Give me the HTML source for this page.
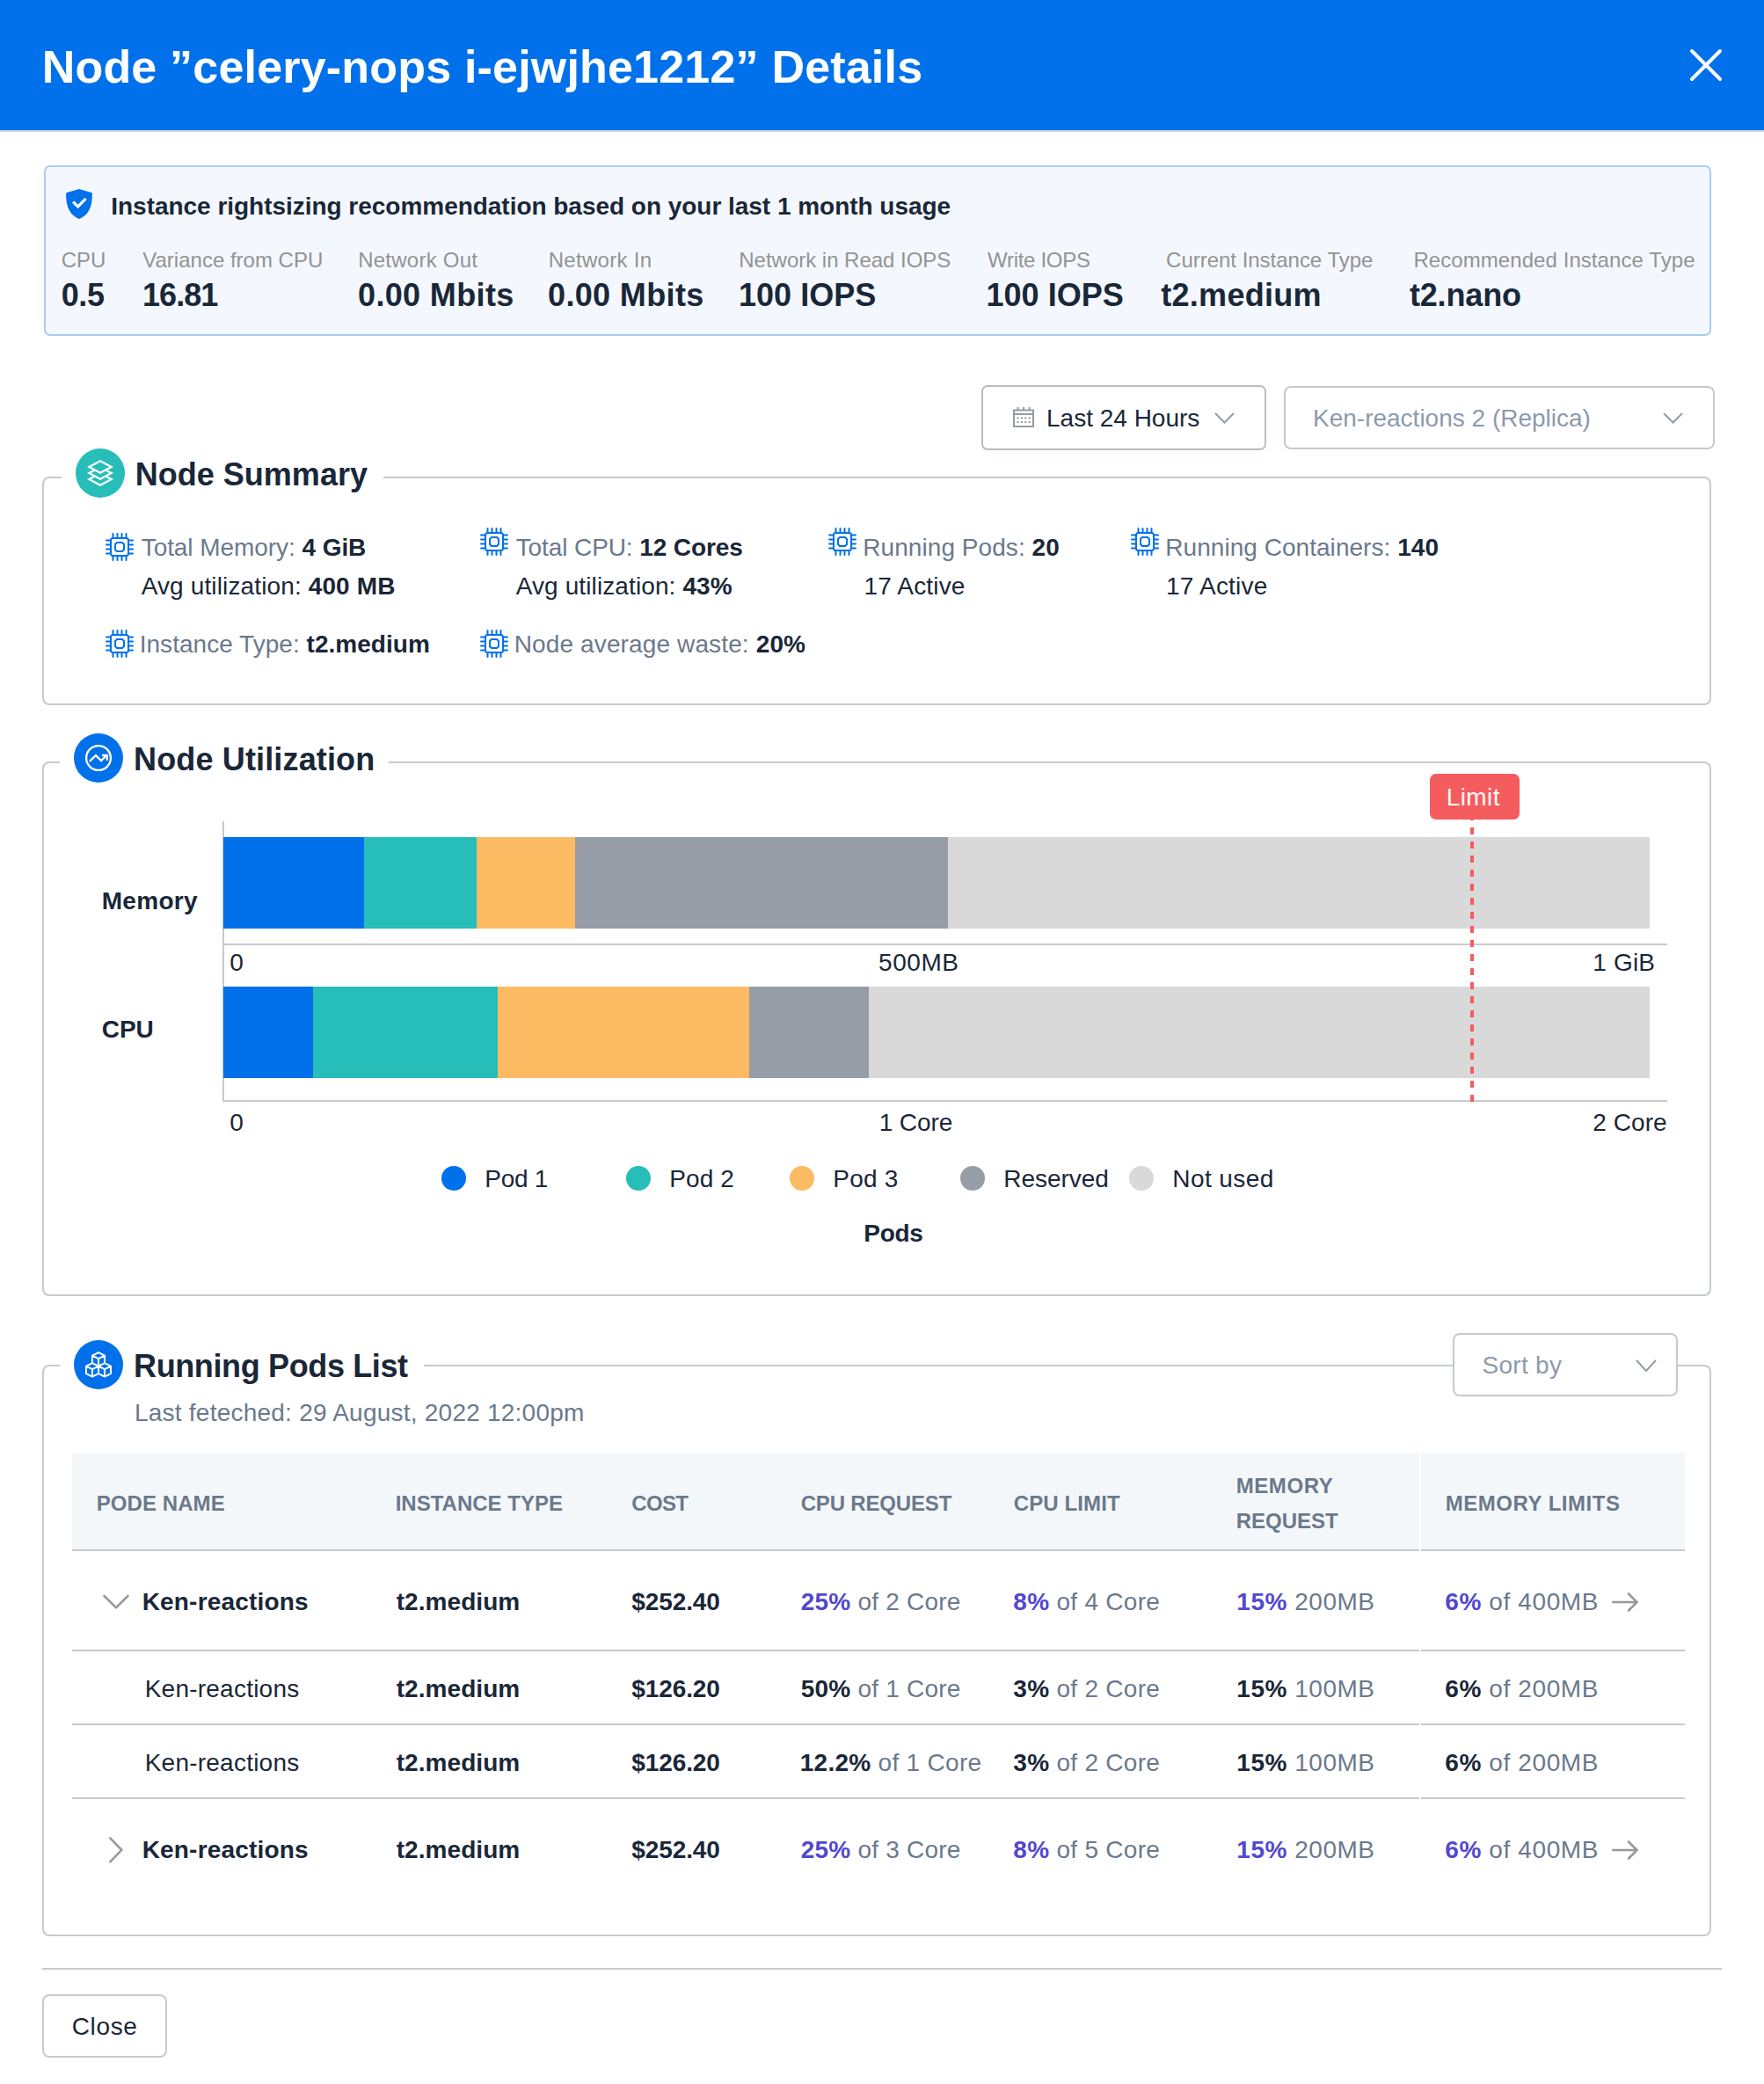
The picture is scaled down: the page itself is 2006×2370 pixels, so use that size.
<!DOCTYPE html>
<html lang="en">
<head>
<meta charset="utf-8">
<title>Node Details</title>
<style>
*{box-sizing:border-box;margin:0;padding:0}
html,body{width:2006px;height:2370px;background:#fff;overflow:hidden}
body{position:relative;font-family:"Liberation Sans",sans-serif;color:#1A2738}
.t{position:absolute;white-space:pre;line-height:1;font-weight:400}
.t b{font-weight:700}
.a{position:absolute;display:block}
.grp{position:absolute;left:0;top:0;width:0;height:0}
.box{position:absolute;border:2px solid #C6CACF;border-radius:8px;background:#fff}
.fs{position:absolute;border:2px solid #C6CACF;border-radius:8px}
.gap{position:absolute;background:#fff;height:6px}
</style>
</head>
<body>

<header class="grp">
<i class="a" style="left:0;top:0;width:2006px;height:148px;background:#0071EA"></i>
<i class="a" style="left:0;top:148px;width:2006px;height:2px;background:#CFD2D6"></i>
<span class="t" style="left:47.7px;top:50px;font-size:52px;letter-spacing:0.19px;font-weight:700;color:#fff;">Node ”celery-nops i-ejwjhe1212” Details</span>
<svg class="a" style="left:1918px;top:52px" width="44" height="44" viewBox="0 0 44 44" fill="none" stroke="#fff" stroke-width="4" stroke-linecap="round"><path d="M6 6l32 32M38 6L6 38"/></svg>
</header>

<section class="grp">
<div class="a" style="left:50px;top:188px;width:1896px;height:194px;border:2px solid #A9CDF4;border-radius:7px;background:#F4F8FE"></div>
<svg class="a" style="left:72px;top:212px" width="36" height="40" viewBox="0 0 36 40"><path d="M18 3L32.800 7.300C33.500 24 28 33 18 37C8 33 2.500 24 3.200 7.300Z" fill="#0071EA"/><path d="M11.100 17.500L16.600 22.900L25.600 13.900" fill="none" stroke="#F4F8FE" stroke-width="3.200"/></svg>
<span class="t" style="left:126.3px;top:221px;font-size:28px;letter-spacing:-0.03px;font-weight:700;color:#1A2738;">Instance rightsizing recommendation based on your last 1 month usage</span>
<span class="t" style="left:69.7px;top:284px;font-size:24px;color:#939393;">CPU</span>
<span class="t" style="left:162.3px;top:284px;font-size:24px;color:#939393;">Variance from CPU</span>
<span class="t" style="left:407.2px;top:284px;font-size:24px;letter-spacing:0.24px;color:#939393;">Network Out</span>
<span class="t" style="left:623.7px;top:284px;font-size:24px;letter-spacing:0.29px;color:#939393;">Network In</span>
<span class="t" style="left:840.3px;top:284px;font-size:24px;letter-spacing:-0.02px;color:#939393;">Network in Read IOPS</span>
<span class="t" style="left:1123.0px;top:284px;font-size:24px;letter-spacing:-0.29px;color:#939393;">Write IOPS</span>
<span class="t" style="left:1326.1px;top:284px;font-size:24px;letter-spacing:-0.02px;color:#939393;">Current Instance Type</span>
<span class="t" style="left:1607.4px;top:284px;font-size:24px;letter-spacing:0.07px;color:#939393;">Recommended Instance Type</span>
<span class="t" style="left:69.7px;top:318px;font-size:36px;letter-spacing:-0.36px;font-weight:700;color:#1A2738;">0.5</span>
<span class="t" style="left:162.0px;top:318px;font-size:36px;letter-spacing:-0.94px;font-weight:700;color:#1A2738;">16.81</span>
<span class="t" style="left:407.0px;top:318px;font-size:36px;letter-spacing:0.36px;font-weight:700;color:#1A2738;">0.00 Mbits</span>
<span class="t" style="left:623.0px;top:318px;font-size:36px;letter-spacing:0.36px;font-weight:700;color:#1A2738;">0.00 Mbits</span>
<span class="t" style="left:840.0px;top:318px;font-size:36px;letter-spacing:0.03px;font-weight:700;color:#1A2738;">100 IOPS</span>
<span class="t" style="left:1121.5px;top:318px;font-size:36px;letter-spacing:0.03px;font-weight:700;color:#1A2738;">100 IOPS</span>
<span class="t" style="left:1320.3px;top:318px;font-size:36px;letter-spacing:0.27px;font-weight:700;color:#1A2738;">t2.medium</span>
<span class="t" style="left:1602.9px;top:318px;font-size:36px;letter-spacing:-0.15px;font-weight:700;color:#1A2738;">t2.nano</span>
</section>

<section class="grp">
<div class="box" style="left:1116px;top:438px;width:324px;height:74px;border-color:#B7BCC3;border-radius:7px"></div>
<svg class="a" style="left:1150px;top:461px" width="28" height="26" viewBox="0 0 28 26" fill="none" stroke="#949BA5" stroke-width="2"><rect x="3" y="5.500" width="22" height="18.500"/><path d="M3 10h22M7.500 2v3.500M14 2v3.500M20.600 2v3.500"/><g fill="#949BA5" stroke="none"><rect x="6.500" y="13.400" width="2" height="2"/><rect x="10.900" y="13.400" width="2" height="2"/><rect x="15.200" y="13.400" width="2" height="2"/><rect x="19.600" y="13.400" width="2" height="2"/><rect x="6.500" y="18" width="2" height="2"/><rect x="10.900" y="18" width="2" height="2"/><rect x="15.200" y="18" width="2" height="2"/><rect x="19.600" y="18" width="2" height="2"/></g></svg>
<svg class="a" style="left:1379.5px;top:468.0px" width="25.0" height="14.5" viewBox="0 0 25.0 14.5" fill="none" stroke="#949BA5" stroke-width="2"><path d="M2 2L12.5 12.5L23.0 2"/></svg>
<div class="box" style="left:1460px;top:439px;width:490px;height:72px"></div>
<svg class="a" style="left:1890.0px;top:468.0px" width="25.0" height="14.5" viewBox="0 0 25.0 14.5" fill="none" stroke="#949BA5" stroke-width="2"><path d="M2 2L12.5 12.5L23.0 2"/></svg>
<span class="t" style="left:1190.0px;top:462px;font-size:28px;color:#1A2738;">Last 24 Hours</span>
<span class="t" style="left:1493.0px;top:462px;font-size:28px;color:#8D9AAC;">Ken-reactions 2 (Replica)</span>
</section>

<section class="grp">
<div class="fs" style="left:48px;top:542px;width:1898px;height:260px"></div>
<i class="gap" style="left:70px;top:540px;width:366px"></i>
<svg class="a" style="left:86px;top:510px" width="56" height="56" viewBox="0 0 56 56"><circle cx="28" cy="28" r="28" fill="#27BDB8"/><g fill="#27BDB8" stroke="#fff" stroke-width="2.200" stroke-linejoin="miter"><path d="M28 28.3L40.700 35L28 41.7L15.300 35Z"/><path d="M28 21.3L40.700 28L28 34.7L15.300 28Z"/><path d="M28 14.3L40.700 21L28 27.7L15.300 21Z"/></g></svg>
<svg class="a" style="left:120px;top:606px" width="32" height="32" viewBox="0 0 32 32" fill="none" stroke="#0071EA" stroke-width="2" stroke-linecap="round"><path d="M8.5 1v4M8.5 27v4M1 8.5h4M27 8.5h4"/><path d="M13.5 1v4M13.5 27v4M1 13.5h4M27 13.5h4"/><path d="M18.5 1v4M18.5 27v4M1 18.5h4M27 18.5h4"/><path d="M23.5 1v4M23.5 27v4M1 23.5h4M27 23.5h4"/><rect x="6" y="6" width="20" height="20" rx="2.5"/><path d="M13 11h6l2 2v6l-2 2h-6l-2-2v-6z" stroke-linejoin="round"/></svg><svg class="a" style="left:120px;top:716px" width="32" height="32" viewBox="0 0 32 32" fill="none" stroke="#0071EA" stroke-width="2" stroke-linecap="round"><path d="M8.5 1v4M8.5 27v4M1 8.5h4M27 8.5h4"/><path d="M13.5 1v4M13.5 27v4M1 13.5h4M27 13.5h4"/><path d="M18.5 1v4M18.5 27v4M1 18.5h4M27 18.5h4"/><path d="M23.5 1v4M23.5 27v4M1 23.5h4M27 23.5h4"/><rect x="6" y="6" width="20" height="20" rx="2.5"/><path d="M13 11h6l2 2v6l-2 2h-6l-2-2v-6z" stroke-linejoin="round"/></svg><svg class="a" style="left:546px;top:600px" width="32" height="32" viewBox="0 0 32 32" fill="none" stroke="#0071EA" stroke-width="2" stroke-linecap="round"><path d="M8.5 1v4M8.5 27v4M1 8.5h4M27 8.5h4"/><path d="M13.5 1v4M13.5 27v4M1 13.5h4M27 13.5h4"/><path d="M18.5 1v4M18.5 27v4M1 18.5h4M27 18.5h4"/><path d="M23.5 1v4M23.5 27v4M1 23.5h4M27 23.5h4"/><rect x="6" y="6" width="20" height="20" rx="2.5"/><path d="M13 11h6l2 2v6l-2 2h-6l-2-2v-6z" stroke-linejoin="round"/></svg><svg class="a" style="left:546px;top:716px" width="32" height="32" viewBox="0 0 32 32" fill="none" stroke="#0071EA" stroke-width="2" stroke-linecap="round"><path d="M8.5 1v4M8.5 27v4M1 8.5h4M27 8.5h4"/><path d="M13.5 1v4M13.5 27v4M1 13.5h4M27 13.5h4"/><path d="M18.5 1v4M18.5 27v4M1 18.5h4M27 18.5h4"/><path d="M23.5 1v4M23.5 27v4M1 23.5h4M27 23.5h4"/><rect x="6" y="6" width="20" height="20" rx="2.5"/><path d="M13 11h6l2 2v6l-2 2h-6l-2-2v-6z" stroke-linejoin="round"/></svg><svg class="a" style="left:942px;top:600px" width="32" height="32" viewBox="0 0 32 32" fill="none" stroke="#0071EA" stroke-width="2" stroke-linecap="round"><path d="M8.5 1v4M8.5 27v4M1 8.5h4M27 8.5h4"/><path d="M13.5 1v4M13.5 27v4M1 13.5h4M27 13.5h4"/><path d="M18.5 1v4M18.5 27v4M1 18.5h4M27 18.5h4"/><path d="M23.5 1v4M23.5 27v4M1 23.5h4M27 23.5h4"/><rect x="6" y="6" width="20" height="20" rx="2.5"/><path d="M13 11h6l2 2v6l-2 2h-6l-2-2v-6z" stroke-linejoin="round"/></svg><svg class="a" style="left:1286px;top:600px" width="32" height="32" viewBox="0 0 32 32" fill="none" stroke="#0071EA" stroke-width="2" stroke-linecap="round"><path d="M8.5 1v4M8.5 27v4M1 8.5h4M27 8.5h4"/><path d="M13.5 1v4M13.5 27v4M1 13.5h4M27 13.5h4"/><path d="M18.5 1v4M18.5 27v4M1 18.5h4M27 18.5h4"/><path d="M23.5 1v4M23.5 27v4M1 23.5h4M27 23.5h4"/><rect x="6" y="6" width="20" height="20" rx="2.5"/><path d="M13 11h6l2 2v6l-2 2h-6l-2-2v-6z" stroke-linejoin="round"/></svg>
<span class="t" style="left:153.7px;top:522px;font-size:36px;letter-spacing:0.02px;font-weight:700;color:#1A2738;">Node Summary</span>
<span class="t" style="left:160.7px;top:609px;font-size:28px;letter-spacing:-0.06px;"><span style="color:#6B798C">Total Memory: </span><b style="color:#1A2738">4 GiB</b></span>
<span class="t" style="left:160.7px;top:653px;font-size:28px;letter-spacing:0.13px;"><span style="color:#1A2738">Avg utilization: </span><b style="color:#1A2738">400 MB</b></span>
<span class="t" style="left:158.7px;top:719px;font-size:28px;letter-spacing:0.03px;"><span style="color:#6B798C">Instance Type: </span><b style="color:#1A2738">t2.medium</b></span>
<span class="t" style="left:586.7px;top:609px;font-size:28px;letter-spacing:-0.10px;"><span style="color:#6B798C">Total CPU: </span><b style="color:#1A2738">12 Cores</b></span>
<span class="t" style="left:586.7px;top:653px;font-size:28px;letter-spacing:0.11px;"><span style="color:#1A2738">Avg utilization: </span><b style="color:#1A2738">43%</b></span>
<span class="t" style="left:584.7px;top:719px;font-size:28px;letter-spacing:0.13px;"><span style="color:#6B798C">Node average waste: </span><b style="color:#1A2738">20%</b></span>
<span class="t" style="left:981.3px;top:609px;font-size:28px;letter-spacing:0.06px;"><span style="color:#6B798C">Running Pods: </span><b style="color:#1A2738">20</b></span>
<span class="t" style="left:982.5px;top:653px;font-size:28px;letter-spacing:0.16px;color:#1A2738;">17 Active</span>
<span class="t" style="left:1325.3px;top:609px;font-size:28px;letter-spacing:0.04px;"><span style="color:#6B798C">Running Containers: </span><b style="color:#1A2738">140</b></span>
<span class="t" style="left:1326.0px;top:653px;font-size:28px;letter-spacing:0.21px;color:#1A2738;">17 Active</span>
</section>

<section class="grp">
<div class="fs" style="left:48px;top:866px;width:1898px;height:608px"></div>
<i class="gap" style="left:68px;top:864px;width:374px"></i>
<svg class="a" style="left:84px;top:834px" width="56" height="56" viewBox="0 0 56 56"><circle cx="28" cy="28" r="28" fill="#0071EA"/><g fill="none" stroke="#fff" stroke-width="2.300"><circle cx="28" cy="28" r="13.900"/><path d="M18.500 31.200L24.900 25.200L31.100 31.100L37 25.300" stroke-linecap="round" stroke-linejoin="miter"/><path d="M32 25h5.800v5.800" stroke-linecap="butt"/></g></svg>
<i class="a" style="left:253px;top:934px;width:2px;height:319px;background:#C9C9C9"></i>
<i class="a" style="left:254px;top:952px;width:160px;height:104px;background:#0071EA"></i><i class="a" style="left:414px;top:952px;width:128px;height:104px;background:#27BDB8"></i><i class="a" style="left:542px;top:952px;width:112px;height:104px;background:#FCBB62"></i><i class="a" style="left:654px;top:952px;width:424px;height:104px;background:#979DA6"></i><i class="a" style="left:1078px;top:952px;width:798px;height:104px;background:#D9D9D9"></i><i class="a" style="left:254px;top:1122px;width:102px;height:104px;background:#0071EA"></i><i class="a" style="left:356px;top:1122px;width:210px;height:104px;background:#27BDB8"></i><i class="a" style="left:566px;top:1122px;width:286px;height:104px;background:#FCBB62"></i><i class="a" style="left:852px;top:1122px;width:136px;height:104px;background:#979DA6"></i><i class="a" style="left:988px;top:1122px;width:888px;height:104px;background:#D9D9D9"></i>
<i class="a" style="left:253px;top:1073px;width:1643px;height:2px;background:#C9C9C9"></i>
<i class="a" style="left:253px;top:1251px;width:1643px;height:2px;background:#C9C9C9"></i>
<svg class="a" style="left:1672px;top:925px" width="4" height="328" viewBox="0 0 4 328"><path d="M2 0V328" stroke="#F55C5E" stroke-width="4" stroke-dasharray="8 8" fill="none"/></svg>
<i class="a" style="left:1626px;top:880px;width:102px;height:52px;border-radius:7px;background:#F55C5E"></i>
<i class="a" style="left:502px;top:1326px;width:28px;height:28px;border-radius:50%;background:#0071EA"></i><i class="a" style="left:712px;top:1326px;width:28px;height:28px;border-radius:50%;background:#27BDB8"></i><i class="a" style="left:898px;top:1326px;width:28px;height:28px;border-radius:50%;background:#FCBB62"></i><i class="a" style="left:1092px;top:1326px;width:28px;height:28px;border-radius:50%;background:#979DA6"></i><i class="a" style="left:1284px;top:1326px;width:28px;height:28px;border-radius:50%;background:#D9D9D9"></i>
<span class="t" style="left:152.0px;top:846px;font-size:36px;letter-spacing:0.15px;font-weight:700;color:#1A2738;">Node Utilization</span>
<span class="t" style="left:115.7px;top:1011px;font-size:28px;letter-spacing:0.30px;font-weight:700;color:#1A2738;">Memory</span>
<span class="t" style="left:115.7px;top:1157px;font-size:28px;font-weight:700;color:#1A2738;">CPU</span>
<span class="t" style="left:261.3px;top:1081px;font-size:28px;color:#1A2738;">0</span>
<span class="t" style="left:999.0px;top:1081px;font-size:28px;letter-spacing:0.56px;color:#1A2738;">500MB</span>
<span class="t" style="left:1811.3px;top:1081px;font-size:28px;letter-spacing:0.16px;color:#1A2738;">1 GiB</span>
<span class="t" style="left:261.3px;top:1263px;font-size:28px;color:#1A2738;">0</span>
<span class="t" style="left:999.7px;top:1263px;font-size:28px;letter-spacing:-0.09px;color:#1A2738;">1 Core</span>
<span class="t" style="left:1811.3px;top:1263px;font-size:28px;letter-spacing:0.05px;color:#1A2738;">2 Core</span>
<span class="t" style="left:1644.7px;top:893px;font-size:28px;letter-spacing:0.42px;color:#fff;">Limit</span>
<span class="t" style="left:551.3px;top:1327px;font-size:28px;letter-spacing:-0.30px;color:#1A2738;">Pod 1</span>
<span class="t" style="left:761.3px;top:1327px;font-size:28px;letter-spacing:0.10px;color:#1A2738;">Pod 2</span>
<span class="t" style="left:947.3px;top:1327px;font-size:28px;letter-spacing:0.20px;color:#1A2738;">Pod 3</span>
<span class="t" style="left:1141.3px;top:1327px;font-size:28px;letter-spacing:-0.04px;color:#1A2738;">Reserved</span>
<span class="t" style="left:1333.3px;top:1327px;font-size:28px;letter-spacing:0.41px;color:#1A2738;">Not used</span>
<span class="t" style="left:982.3px;top:1389px;font-size:28px;letter-spacing:-0.29px;font-weight:700;color:#1A2738;">Pods</span>
</section>

<section class="grp">
<div class="fs" style="left:48px;top:1552px;width:1898px;height:650px"></div>
<i class="gap" style="left:68px;top:1550px;width:414px"></i>
<svg class="a" style="left:84px;top:1524px" width="56" height="56" viewBox="0 0 56 56"><circle cx="28" cy="28" r="28" fill="#0071EA"/><path fill="none" stroke="#fff" stroke-width="2" stroke-linejoin="round" d="M28 14.1l7 3.5v8.5l-7 3.5l-7-3.5v-8.5zM21 17.6l7 3.5l7-3.5M28 21.1v8.5M21 26.1l7 3.5v8.5l-7 3.5l-7-3.5v-8.5zM14 29.6l7 3.5l7-3.5M21 33.1v8.5M35 26.1l7 3.5v8.5l-7 3.5l-7-3.5v-8.5zM28 29.6l7 3.5l7-3.5M35 33.1v8.5"/></svg>
<div class="box" style="left:1652px;top:1516px;width:256px;height:72px"></div>
<svg class="a" style="left:1859px;top:1544.5px" width="26" height="16" viewBox="0 0 26 16" fill="none" stroke="#949BA5" stroke-width="2"><path d="M2 2L13 14L24 2"/></svg>
<i class="a" style="left:82px;top:1652px;width:1834px;height:110px;background:#F4F7FA"></i><i class="a" style="left:82px;top:1762px;width:1834px;height:2px;background:#C6CACF"></i><i class="a" style="left:82px;top:1876px;width:1834px;height:2px;background:#C6CACF"></i><i class="a" style="left:82px;top:1960px;width:1834px;height:2px;background:#C6CACF"></i><i class="a" style="left:82px;top:2044px;width:1834px;height:2px;background:#C6CACF"></i><i class="a" style="left:1614px;top:1652px;width:2px;height:506px;background:#fff"></i>
<svg class="a" style="left:114px;top:1810px" width="36" height="24" viewBox="0 0 36 24" fill="none" stroke="#999" stroke-width="2.6" stroke-linecap="round"><path d="M4.500 5L18 18.300L31.500 5"/></svg>
<svg class="a" style="left:120px;top:2086px" width="24" height="36" viewBox="0 0 24 36" fill="none" stroke="#999" stroke-width="2.6" stroke-linecap="round"><path d="M5.300 4.300L18.300 17.800L5.300 31.300"/></svg>
<svg class="a" style="left:1831px;top:1807.5px" width="36" height="28" viewBox="0 0 36 28" fill="none" stroke="#999" stroke-width="2.6" stroke-linecap="round" stroke-linejoin="miter"><path d="M3.3 14h27.2M21 4.500l9.500 9.500l-9.500 9.500"/></svg><svg class="a" style="left:1831px;top:2089.5px" width="36" height="28" viewBox="0 0 36 28" fill="none" stroke="#999" stroke-width="2.6" stroke-linecap="round" stroke-linejoin="miter"><path d="M3.3 14h27.2M21 4.500l9.500 9.500l-9.500 9.500"/></svg>
<span class="t" style="left:152.0px;top:1536px;font-size:36px;letter-spacing:-0.37px;font-weight:700;color:#1A2738;">Running Pods List</span>
<span class="t" style="left:153.0px;top:1593px;font-size:28px;letter-spacing:0.23px;color:#6B798C;">Last feteched: 29 August, 2022 12:00pm</span>
<span class="t" style="left:1685.4px;top:1539px;font-size:28px;letter-spacing:0.32px;color:#8D9AAC;">Sort by</span>
<span class="t" style="left:109.7px;top:1698px;font-size:24px;letter-spacing:0.08px;font-weight:700;color:#6B798C;">PODE NAME</span>
<span class="t" style="left:449.7px;top:1698px;font-size:24px;font-weight:700;color:#6B798C;">INSTANCE TYPE</span>
<span class="t" style="left:718.2px;top:1698px;font-size:24px;letter-spacing:-0.64px;font-weight:700;color:#6B798C;">COST</span>
<span class="t" style="left:910.7px;top:1698px;font-size:24px;letter-spacing:-0.17px;font-weight:700;color:#6B798C;">CPU REQUEST</span>
<span class="t" style="left:1152.7px;top:1698px;font-size:24px;letter-spacing:0.12px;font-weight:700;color:#6B798C;">CPU LIMIT</span>
<span class="t" style="left:1405.7px;top:1678px;font-size:24px;letter-spacing:0.58px;font-weight:700;color:#6B798C;">MEMORY</span>
<span class="t" style="left:1405.7px;top:1718px;font-size:24px;font-weight:700;color:#6B798C;">REQUEST</span>
<span class="t" style="left:1643.7px;top:1698px;font-size:24px;letter-spacing:0.52px;font-weight:700;color:#6B798C;">MEMORY LIMITS</span>
<span class="t" style="left:161.7px;top:1808px;font-size:28px;letter-spacing:0.18px;font-weight:700;color:#1A2738;">Ken-reactions</span>
<span class="t" style="left:450.7px;top:1808px;font-size:28px;letter-spacing:0.06px;font-weight:700;color:#1A2738;">t2.medium</span>
<span class="t" style="left:718.3px;top:1808px;font-size:28px;letter-spacing:-0.11px;font-weight:700;color:#1A2738;">$252.40</span>
<span class="t" style="left:910.7px;top:1808px;font-size:28px;letter-spacing:0.22px;"><b style="color:#5248CF">25% </b><span style="color:#6B798C">of 2 Core</span></span>
<span class="t" style="left:1152.3px;top:1808px;font-size:28px;letter-spacing:0.29px;"><b style="color:#5248CF">8% </b><span style="color:#6B798C">of 4 Core</span></span>
<span class="t" style="left:1406.3px;top:1808px;font-size:28px;letter-spacing:0.52px;"><b style="color:#5248CF">15% </b><span style="color:#6B798C">200MB</span></span>
<span class="t" style="left:1643.3px;top:1808px;font-size:28px;letter-spacing:0.60px;"><b style="color:#5248CF">6% </b><span style="color:#6B798C">of 400MB</span></span>
<span class="t" style="left:164.7px;top:1907px;font-size:28px;letter-spacing:0.23px;color:#1A2738;">Ken-reactions</span>
<span class="t" style="left:450.7px;top:1907px;font-size:28px;letter-spacing:0.06px;font-weight:700;color:#1A2738;">t2.medium</span>
<span class="t" style="left:718.3px;top:1907px;font-size:28px;letter-spacing:-0.11px;font-weight:700;color:#1A2738;">$126.20</span>
<span class="t" style="left:910.7px;top:1907px;font-size:28px;letter-spacing:0.22px;"><b style="color:#1A2738">50% </b><span style="color:#6B798C">of 1 Core</span></span>
<span class="t" style="left:1152.3px;top:1907px;font-size:28px;letter-spacing:0.29px;"><b style="color:#1A2738">3% </b><span style="color:#6B798C">of 2 Core</span></span>
<span class="t" style="left:1406.3px;top:1907px;font-size:28px;letter-spacing:0.52px;"><b style="color:#1A2738">15% </b><span style="color:#6B798C">100MB</span></span>
<span class="t" style="left:1643.3px;top:1907px;font-size:28px;letter-spacing:0.60px;"><b style="color:#1A2738">6% </b><span style="color:#6B798C">of 200MB</span></span>
<span class="t" style="left:164.7px;top:1991px;font-size:28px;letter-spacing:0.23px;color:#1A2738;">Ken-reactions</span>
<span class="t" style="left:450.7px;top:1991px;font-size:28px;letter-spacing:0.06px;font-weight:700;color:#1A2738;">t2.medium</span>
<span class="t" style="left:718.3px;top:1991px;font-size:28px;letter-spacing:-0.11px;font-weight:700;color:#1A2738;">$126.20</span>
<span class="t" style="left:909.7px;top:1991px;font-size:28px;letter-spacing:0.29px;"><b style="color:#1A2738">12.2% </b><span style="color:#6B798C">of 1 Core</span></span>
<span class="t" style="left:1152.3px;top:1991px;font-size:28px;letter-spacing:0.29px;"><b style="color:#1A2738">3% </b><span style="color:#6B798C">of 2 Core</span></span>
<span class="t" style="left:1406.3px;top:1991px;font-size:28px;letter-spacing:0.52px;"><b style="color:#1A2738">15% </b><span style="color:#6B798C">100MB</span></span>
<span class="t" style="left:1643.3px;top:1991px;font-size:28px;letter-spacing:0.60px;"><b style="color:#1A2738">6% </b><span style="color:#6B798C">of 200MB</span></span>
<span class="t" style="left:161.7px;top:2090px;font-size:28px;letter-spacing:0.18px;font-weight:700;color:#1A2738;">Ken-reactions</span>
<span class="t" style="left:450.7px;top:2090px;font-size:28px;letter-spacing:0.06px;font-weight:700;color:#1A2738;">t2.medium</span>
<span class="t" style="left:718.3px;top:2090px;font-size:28px;letter-spacing:-0.11px;font-weight:700;color:#1A2738;">$252.40</span>
<span class="t" style="left:910.7px;top:2090px;font-size:28px;letter-spacing:0.22px;"><b style="color:#5248CF">25% </b><span style="color:#6B798C">of 3 Core</span></span>
<span class="t" style="left:1152.3px;top:2090px;font-size:28px;letter-spacing:0.29px;"><b style="color:#5248CF">8% </b><span style="color:#6B798C">of 5 Core</span></span>
<span class="t" style="left:1406.3px;top:2090px;font-size:28px;letter-spacing:0.52px;"><b style="color:#5248CF">15% </b><span style="color:#6B798C">200MB</span></span>
<span class="t" style="left:1643.3px;top:2090px;font-size:28px;letter-spacing:0.60px;"><b style="color:#5248CF">6% </b><span style="color:#6B798C">of 400MB</span></span>
</section>

<footer class="grp">
<i class="a" style="left:48px;top:2238px;width:1910px;height:2px;background:#C6CACF"></i>
<div class="box" style="left:48px;top:2268px;width:142px;height:72px"></div>
<span class="t" style="left:81.7px;top:2291px;font-size:28px;letter-spacing:0.65px;color:#1A2738;">Close</span>
</footer>

</body>
</html>
